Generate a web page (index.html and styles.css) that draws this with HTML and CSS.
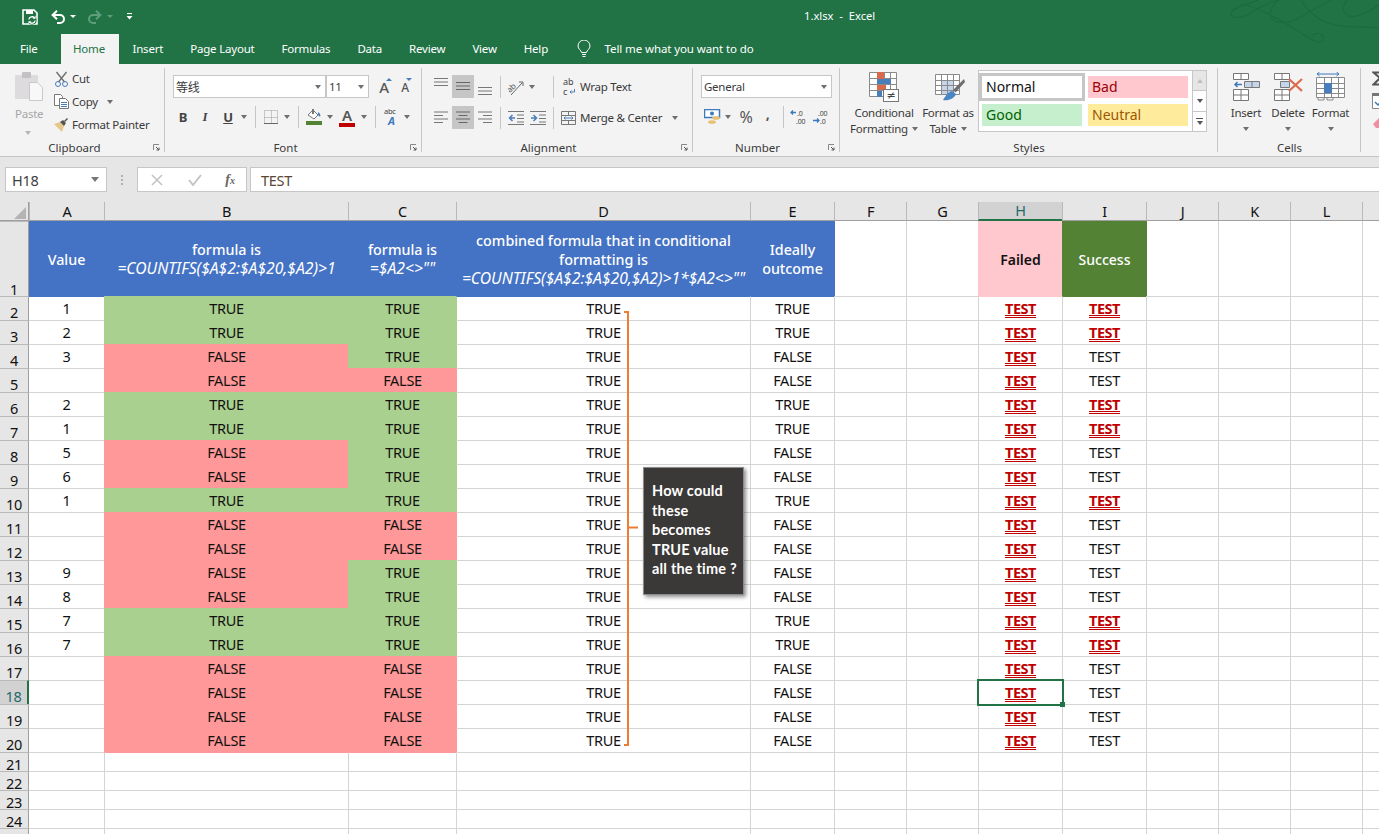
FILE: index.html
```html
<!DOCTYPE html>
<html lang="en">
<head>
<meta charset="utf-8">
<title>1.xlsx - Excel</title>
<link rel="stylesheet" href="styles.css">
</head>
<body>
<div class="app">
  <header class="title">
    <div class="qat">
      <svg class="q-save" width="16" height="16" viewBox="0 0 16 16"><path d="M1 1h11l3 3v11H1z" fill="none" stroke="#fff" stroke-width="1.6"/><path d="M4 1h7v4H4z" fill="#fff"/><circle cx="10" cy="11" r="4.6" fill="#217346"/><path d="M6.8 10.5a3.3 3.3 0 0 1 5.8-1.5M13.2 11.5a3.3 3.3 0 0 1-5.8 1.5" fill="none" stroke="#fff" stroke-width="1.3"/><path d="M13.6 6.8v3h-3zM6.4 15.2v-3h3z" fill="#fff"/></svg>
      <svg class="q-undo" width="15" height="14" viewBox="0 0 15 14"><path d="M2 5h7a4 4 0 0 1 0 8H6" fill="none" stroke="#fff" stroke-width="2"/><path d="M6 .8 1.6 5 6 9.2" fill="none" stroke="#fff" stroke-width="2"/></svg>
      <span class="caret white q-c1"></span>
      <svg class="q-redo" width="15" height="14" viewBox="0 0 15 14"><path d="M13 5H6a4 4 0 0 0 0 8h3" fill="none" stroke="#5d9d7c" stroke-width="2"/><path d="M9 .8 13.4 5 9 9.2" fill="none" stroke="#5d9d7c" stroke-width="2"/></svg>
      <span class="caret muted q-c2"></span>
      <svg class="q-more" width="7" height="7" viewBox="0 0 7 7"><path d="M1 .5h5" stroke="#fff" stroke-width="1.2"/><path d="M.5 3h6L3.5 6.5z" fill="#fff"/></svg>
    </div>
    <div class="doc">1.xlsx&nbsp; -&nbsp; Excel</div>
    <svg class="ornament" width="150" height="46" viewBox="0 0 150 46"><g fill="none" stroke="#1e6a40" stroke-width="1.2"><path d="M30 0C18 4 2 8 2 13c0 6 10 6 18 1S42 2 50 0"/><path d="M12 4c14 2 36 14 52 24 12 7 20 14 26 14 5 0 6-4 3-7s-8-2-11 2"/><path d="M50 0c-9 6-11 16-6 20s18 3 28-3 24-15 32-17"/><path d="M72 0c4 8 16 20 30 24s30 2 48 4"/><path d="M118 0c-5 6-5 14 2 16s22-4 30-12"/></g></svg>
  </header>

  <nav class="tabs">
    <span class="tab file">File</span>
    <span class="tab home">Home</span>
    <span class="tab">Insert</span>
    <span class="tab">Page Layout</span>
    <span class="tab">Formulas</span>
    <span class="tab">Data</span>
    <span class="tab">Review</span>
    <span class="tab">View</span>
    <span class="tab">Help</span>
    <svg class="bulb" width="14" height="18" viewBox="0 0 14 18"><path d="M4.5 12.5C4 10 1 9 1 6a6 6 0 0 1 12 0c0 3-3 4-3.500 6.500z" fill="none" stroke="#fff"/><path d="M5 14.500h4M5.500 16.500h3" stroke="#fff"/></svg>
    <span class="tell">Tell me what you want to do</span>
  </nav>

  <section class="ribbon">
    <div class="grp g-clip">
      <div class="body clip-body">
        <div class="paste">
          <svg width="28" height="31" viewBox="0 0 28 31"><rect x="0" y="4" width="23" height="24" rx="1" fill="#dedbde"/><rect x="7" y="1" width="9" height="6" rx="1" fill="#c4c1c4"/><path d="M14.500 11.500h8l5 5v13h-13z" fill="#f8f8f8" stroke="#c9c9c9"/></svg>
          <span class="paste-label">Paste</span>
          <span class="caret pale"></span>
        </div>
        <div class="clip-col">
          <div class="clip-row"><svg width="14" height="16" viewBox="0 0 14 16"><path d="M2 1l8 10M12 1L4 11" stroke="#6b6b6b" stroke-width="1.300" fill="none"/><circle cx="3.500" cy="13" r="2.500" fill="none" stroke="#4a7ebb"/><circle cx="10.500" cy="13" r="2.500" fill="none" stroke="#4a7ebb"/></svg><span>Cut</span></div>
          <div class="clip-row"><svg width="15" height="15" viewBox="0 0 15 15"><path d="M.5.500h6l2 2v9h-8z" fill="#fff" stroke="#777"/><path d="M5.500 4.500h6l3 3v7h-9z" fill="#fff" stroke="#777"/><path d="M7 8.500h6M7 10.500h6M7 12.500h6" stroke="#4a7ebb"/></svg><span>Copy</span><span class="caret copy-c"></span></div>
          <div class="clip-row"><svg width="15" height="15" viewBox="0 0 15 15"><path d="M0 7l6-2 4 4-2 6z" fill="#e8c88a"/><path d="M6 5l3-2 3 3-2 3z" fill="#555"/><path d="M10 4l3-3 1 1-3 3z" fill="#555"/></svg><span>Format Painter</span></div>
        </div>
      </div>
      <div class="foot">Clipboard<svg class="launch" width="7" height="7" viewBox="0 0 7 7"><path d="M.5 6V.5H6" fill="none" stroke="#888"/><path d="M3 3l3 3M6 3.500V6H3.500" fill="none" stroke="#555"/></svg></div>
    </div>

    <div class="grp g-font">
      <div class="body rows">
        <div class="row">
          <div class="sel font-name"><span class="cjk">等线</span><span class="caret"></span></div>
          <div class="sel font-size"><span>11</span><span class="caret"></span></div>
          <span class="ib w7"></span>
          <span class="ib w16 big-a">A<i class="tri up"></i></span>
          <span class="ib w6"></span>
          <span class="ib w14 small-a">A<i class="tri down"></i></span>
        </div>
        <div class="row row2">
          <b class="ib w20 glyph">B</b>
          <em class="ib w24 glyph">I</em>
          <span class="ib w22 glyph under">U</span>
          <span class="ib w10"><span class="caret"></span></span>
          <span class="ib w12"><i class="vsep"></i></span>
          <span class="ib w19"><svg width="14" height="14" viewBox="0 0 14 14"><path d="M.5.500h13v13H.5zM7.500 .5v13M.5 7.500h13" fill="none" stroke="#9a9a9a" stroke-dasharray="1 1"/><path d="M0 13.500h14" stroke="#666"/></svg></span>
          <span class="ib w14"><span class="caret"></span></span>
          <span class="ib w8"><i class="vsep"></i></span>
          <span class="ib w24"><svg width="16" height="17" viewBox="0 0 16 17"><path d="M2 7l5-5 5 5-4 4z" fill="#fff" stroke="#777"/><path d="M6 1h2v5H6z" fill="#777"/><path d="M12 4c2 1 3 3 2 5l-2-2z" fill="#4a7ebb"/><rect y="13" width="16" height="4" fill="#548235"/></svg></span>
          <span class="ib w8"><span class="caret"></span></span>
          <span class="ib w26 color-a">A</span>
          <span class="ib w8"><span class="caret"></span></span>
          <span class="ib w14"><i class="vsep"></i></span>
          <span class="ib w17"><svg class="over" width="14" height="17" viewBox="0 0 14 17"><text x="0" y="6" font-size="7.500" font-family="Noto Sans" fill="#444">abc</text><text x="4" y="17" font-size="11" font-weight="700" font-style="italic" font-family="Noto Sans" fill="#3d79bd">A</text></svg></span>
          <span class="ib w16"><span class="caret"></span></span>
        </div>
      </div>
      <div class="foot f-pad">Font<svg class="launch" width="7" height="7" viewBox="0 0 7 7"><path d="M.5 6V.5H6" fill="none" stroke="#888"/><path d="M3 3l3 3M6 3.500V6H3.500" fill="none" stroke="#555"/></svg></div>
    </div>

    <div class="grp g-align">
      <div class="body rows">
        <div class="row">
          <span class="ib w22"><svg width="14" height="23" viewBox="0 0 14 23"><path d="M0 3.500h14M0 7h14M0 10.500h14" stroke="#777"/></svg></span>
          <span class="ib w22 on"><svg width="14" height="23" viewBox="0 0 14 23"><path d="M0 7.500h14M0 11h14M0 14.500h14" stroke="#666"/></svg></span>
          <span class="ib w22"><svg width="14" height="23" viewBox="0 0 14 23"><path d="M0 12.500h14M0 16h14M0 19.500h14" stroke="#777"/></svg></span>
          <span class="ib w8"><i class="vsep"></i></span>
          <span class="ib w24"><svg class="over" width="18" height="18" viewBox="0 0 18 18"><text x="0" y="12" font-size="8" font-family="Noto Sans" fill="#555" transform="rotate(-45 5 10)">ab</text><path d="M4 17L15 5M12 4h4v4" stroke="#666" fill="none"/></svg></span>
          <span class="ib w8"><span class="caret"></span></span>
          <span class="ib w12"></span>
          <span class="ib w10"><i class="vsep"></i></span>
          <span class="ib w22"><svg class="over" width="13" height="18" viewBox="0 0 13 18"><text x="0" y="7" font-size="9" letter-spacing="0" font-family="Noto Sans" fill="#444">ab</text><text x="0" y="17" font-size="9" font-family="Noto Sans" fill="#444">c</text><path d="M11.500 11v3H7M8.500 12.500 7 14l1.500 1.500" fill="none" stroke="#4a7ebb"/></svg></span>
          <span class="lbl">Wrap Text</span>
        </div>
        <div class="row row2b">
          <span class="ib w22"><svg width="14" height="23" viewBox="0 0 14 23"><path d="M0 6h14M0 9.500h9M0 13h14M0 16.500h9" stroke="#777"/></svg></span>
          <span class="ib w22 on"><svg width="14" height="23" viewBox="0 0 14 23"><path d="M0 6h14M2.500 9.500h9M0 13h14M2.500 16.500h9" stroke="#666"/></svg></span>
          <span class="ib w22"><svg width="14" height="23" viewBox="0 0 14 23"><path d="M0 6h14M5 9.500h9M0 13h14M5 16.500h9" stroke="#777"/></svg></span>
          <span class="ib w8"><i class="vsep"></i></span>
          <span class="ib w23"><svg width="16" height="14" viewBox="0 0 16 14"><path d="M0 .5h16M9 4h7M9 7.500h7M9 11h7M0 13.500h16" stroke="#777"/><path d="M7 7H2M4.500 4 1.500 7l3 3" fill="none" stroke="#4a7ebb" stroke-width="1.500"/></svg></span>
          <span class="ib w22"><svg width="16" height="14" viewBox="0 0 16 14"><path d="M0 .5h16M9 4h7M9 7.500h7M9 11h7M0 13.500h16" stroke="#777"/><path d="M1 7h5M3.500 4l3 3-3 3" fill="none" stroke="#4a7ebb" stroke-width="1.500"/></svg></span>
          <span class="ib w8"><i class="vsep"></i></span>
          <span class="ib w22"><svg width="15" height="14" viewBox="0 0 15 14"><path d="M.5.500h14v13H.5zM.5 4.500h14M.5 9.500h14M7.500.5v4M7.500 9.500v4" fill="none" stroke="#777"/><path d="M3 7h9M4.500 5.500 3 7l1.500 1.500M10.500 5.500 12 7l-1.500 1.500" fill="none" stroke="#4a7ebb"/></svg></span>
          <span class="lbl merge">Merge &amp; Center</span>
          <span class="caret merge-c"></span>
        </div>
      </div>
      <div class="foot f-pad2">Alignment<svg class="launch" width="7" height="7" viewBox="0 0 7 7"><path d="M.5 6V.5H6" fill="none" stroke="#888"/><path d="M3 3l3 3M6 3.500V6H3.500" fill="none" stroke="#555"/></svg></div>
    </div>

    <div class="grp g-num">
      <div class="body rows">
        <div class="row">
          <div class="sel num-fmt"><span>General</span><span class="caret"></span></div>
        </div>
        <div class="row row2">
          <span class="ib w22"><svg width="17" height="16" viewBox="0 0 17 16"><rect x=".5" y=".5" width="15" height="8" fill="#fff" stroke="#3d79bd" stroke-width="1.500"/><circle cx="8" cy="4.500" r="2" fill="#3d79bd"/><ellipse cx="12" cy="9" rx="4" ry="1.800" fill="#e8c070"/><ellipse cx="8" cy="13" rx="4" ry="1.800" fill="#e8c070"/></svg></span>
          <span class="ib w10"><span class="caret"></span></span>
          <span class="ib w26 pct">%</span>
          <span class="ib w17 comma">,</span>
          <span class="ib w14"><i class="vsep"></i></span>
          <span class="ib w16"><svg class="over" width="16" height="15" viewBox="0 0 16 15"><text x="7" y="6.500" font-size="7" font-family="Noto Sans" fill="#444">.0</text><text x="6" y="14.500" font-size="7" font-family="Noto Sans" fill="#444">.00</text><path d="M6 3.500H1M3 1.500l-2 2 2 2" fill="none" stroke="#3d79bd" stroke-width="1.300"/></svg></span>
          <span class="ib w28"><svg class="over" width="16" height="15" viewBox="0 0 16 15"><text x="6" y="6.500" font-size="7" font-family="Noto Sans" fill="#444">.00</text><text x="8" y="14.500" font-size="7" font-family="Noto Sans" fill="#444">.0</text><path d="M1 11.500h6M5 9.500l2 2-2 2" fill="none" stroke="#3d79bd" stroke-width="1.300"/></svg></span>
        </div>
      </div>
      <div class="foot f-pad2">Number<svg class="launch" width="7" height="7" viewBox="0 0 7 7"><path d="M.5 6V.5H6" fill="none" stroke="#888"/><path d="M3 3l3 3M6 3.500V6H3.500" fill="none" stroke="#555"/></svg></div>
    </div>

    <div class="grp g-styles">
      <div class="body styles-body">
        <div class="bigbtn cf">
          <svg width="30" height="30" viewBox="0 0 30 30"><path d="M.5.500h27v24H.5zM.5 6.500h27M.5 12.500h27M.5 18.500h27M8.500.5v24M15.500.5v24M21.500.5v24" fill="#fff" stroke="#8a8a8a"/><rect x="8" y="0" width="7" height="7" fill="#d9694a"/><rect x="8" y="7" width="14" height="5" fill="#4a7ebb"/><rect x="8" y="13" width="9" height="5" fill="#d9694a"/><rect x="8" y="19" width="5" height="6" fill="#4a7ebb"/><rect x="14.500" y="17.500" width="15" height="12" fill="#fff" stroke="#777"/><text x="22" y="27" text-anchor="middle" font-size="11" font-family="DejaVu Sans" fill="#444">≠</text></svg>
          <span>Conditional</span>
          <span>Formatting<i class="caret inl"></i></span>
        </div>
        <div class="bigbtn ft">
          <svg width="30" height="30" viewBox="0 0 30 30"><rect x=".5" y="2.500" width="24" height="20" fill="#fff"/><rect x="6" y="8" width="13" height="14" fill="#c5d5ea"/><path d="M.5 2.500h24v20H.5zM.5 8.500h24M.5 13.500h24M.5 18.500h24M6.500 2.500v20M12.500 2.500v20M18.500 2.500v20" fill="none" stroke="#8a8a8a"/><path d="M29 7 18 18l2.500 2.500L30 10z" fill="#6e6e6e"/><path d="M17 19c-4 1-6 4-9 9 5 1 11-1 13-6z" fill="#4a85c5"/></svg>
          <span>Format as</span>
          <span>Table<i class="caret inl"></i></span>
        </div>
        <div class="gallery">
          <div class="gal-grid">
            <span class="st normal">Normal</span>
            <span class="st bad">Bad</span>
            <span class="st good">Good</span>
            <span class="st neutral">Neutral</span>
          </div>
          <div class="gal-scroll">
            <span class="gs gs-up"><i class="tri-up"></i></span>
            <span class="gs"><span class="caret dark"></span></span>
            <span class="gs gs-more"><i class="more-bar"></i><span class="caret dark"></span></span>
          </div>
        </div>
      </div>
      <div class="foot">Styles</div>
    </div>

    <div class="grp g-cells">
      <div class="body cells-body">
        <div class="bigbtn cell-btn">
          <svg width="28" height="30" viewBox="0 0 28 30"><path d="M1.500 1.500h15v6h-15zM9 1.500v6M1.500 17.500h15v11h-15zM1.500 23h15M9 17.500v11" fill="#fff" stroke="#777"/><path d="M12.500 9.500h15v6h-15zM20 9.500v6" fill="#c5d5ea" stroke="#777"/><path d="M10 12.500H3M5.500 10 3 12.500 5.500 15" fill="none" stroke="#3d79bd" stroke-width="1.500"/></svg>
          <span>Insert</span><span class="caret"></span>
        </div>
        <div class="bigbtn cell-btn">
          <svg width="31" height="30" viewBox="0 0 31 30"><path d="M1.500 1.500h15v6h-15zM9 1.500v6M1.500 17.500h15v11h-15zM1.500 23h15M9 17.500v11" fill="#fff" stroke="#777"/><path d="M7.500 9.500h9v6h-9z" fill="#c5d5ea" stroke="#777"/><path d="M16 7l13 12M29 7 16 19" stroke="#dd6b4a" stroke-width="2.200"/></svg>
          <span>Delete</span><span class="caret"></span>
        </div>
        <div class="bigbtn cell-btn wider">
          <svg width="29" height="30" viewBox="0 0 29 30"><path d="M1 2h22M3.500 0 1 2l2.500 2M20.500 0 23 2l-2.500 2" fill="none" stroke="#3d79bd"/><path d="M.5 5.500h28v20H.5zM.5 11.500h28M.5 16.500h28M.5 21.500h28M8.500 5.500v20M15.500 5.500v20M22.500 5.500v20" fill="#fff" stroke="#8a8a8a"/><rect x="8" y="11" width="8" height="10" fill="#4a7ebb"/><path d="M2 26v2h6v-2M11 26v2h6v-2" fill="none" stroke="#8a8a8a"/></svg>
          <span>Format</span><span class="caret"></span>
        </div>
      </div>
      <div class="foot">Cells</div>
    </div>

    <div class="g-edit">
      <svg width="16" height="16" viewBox="0 0 16 16"><path d="M14 2.500H1.500L8 8l-6.500 6.500H14" fill="none" stroke="#555" stroke-width="2"/></svg>
      <svg width="16" height="16" viewBox="0 0 16 16"><path d="M.5 .5h15v15H.5z" fill="#fff" stroke="#888"/><path d="M0 0h16v3H0z" fill="#777"/><path d="M3 9l3 3 5-6" fill="none" stroke="#3d79bd" stroke-width="1.500"/></svg>
      <svg width="16" height="12" viewBox="0 0 16 12"><path d="M1 8l7-7 6 4-7 7H4z" fill="#ef8f9f"/></svg>
    </div>
  </section>

  <div class="fbar">
    <div class="namebox"><span>H18</span><span class="caret wide"></span></div>
    <div class="dots"><i></i><i></i><i></i></div>
    <div class="fx-btns">
      <svg width="14" height="14" viewBox="0 0 14 14"><path d="M2 2l10 10M12 2 2 12" stroke="#c4c4c4" stroke-width="1.600"/></svg>
      <svg width="14" height="14" viewBox="0 0 14 14"><path d="M1 7l4 5 8-10" fill="none" stroke="#c4c4c4" stroke-width="2"/></svg>
      <span class="fx">f<small>x</small></span>
    </div>
    <div class="finput">TEST</div>
  </div>

  <div class="sheet">
    <table class="grid">
      <colgroup><col class="c0"><col class="ca"><col class="cb"><col class="cc"><col class="cd"><col class="ce"><col class="cn"><col class="cn"><col class="ct"><col class="ct"><col class="cn"><col class="cn"><col class="cn"><col class="cn"></colgroup>
      <tr class="heads"><th class="corner"><i></i></th><th>A</th><th>B</th><th>C</th><th>D</th><th>E</th><th>F</th><th>G</th><th class="cur">H</th><th>I</th><th>J</th><th>K</th><th>L</th><th></th></tr>
      <tr class="r1">
        <th>1</th>
        <td class="h">Value</td>
        <td class="h">formula is<br><em>=COUNTIFS($A$2:$A$20,$A2)&gt;1</em></td>
        <td class="h">formula is<br><em>=$A2&lt;&gt;""</em></td>
        <td class="h">combined formula that in conditional<br>formatting is<br><em>=COUNTIFS($A$2:$A$20,$A2)&gt;1*$A2&lt;&gt;""</em></td>
        <td class="h">Ideally<br>outcome</td>
        <td></td><td></td>
        <td class="pk">Failed</td>
        <td class="gn">Success</td>
        <td></td><td></td><td></td><td></td>
      </tr>
      <tr class="d"><th>2</th><td class="tb">1</td><td class="g">TRUE</td><td class="g">TRUE</td><td class="tb">TRUE</td><td class="tb">TRUE</td><td></td><td></td><td class="t tp"><u>TEST</u></td><td class="t tn"><u>TEST</u></td><td></td><td></td><td></td><td></td></tr>
      <tr class="d"><th>3</th><td>2</td><td class="g">TRUE</td><td class="g">TRUE</td><td>TRUE</td><td>TRUE</td><td></td><td></td><td class="t"><u>TEST</u></td><td class="t"><u>TEST</u></td><td></td><td></td><td></td><td></td></tr>
      <tr class="d"><th>4</th><td>3</td><td class="r">FALSE</td><td class="g">TRUE</td><td>TRUE</td><td>FALSE</td><td></td><td></td><td class="t"><u>TEST</u></td><td>TEST</td><td></td><td></td><td></td><td></td></tr>
      <tr class="d"><th>5</th><td></td><td class="r">FALSE</td><td class="r">FALSE</td><td>TRUE</td><td>FALSE</td><td></td><td></td><td class="t"><u>TEST</u></td><td>TEST</td><td></td><td></td><td></td><td></td></tr>
      <tr class="d"><th>6</th><td>2</td><td class="g">TRUE</td><td class="g">TRUE</td><td>TRUE</td><td>TRUE</td><td></td><td></td><td class="t"><u>TEST</u></td><td class="t"><u>TEST</u></td><td></td><td></td><td></td><td></td></tr>
      <tr class="d"><th>7</th><td>1</td><td class="g">TRUE</td><td class="g">TRUE</td><td>TRUE</td><td>TRUE</td><td></td><td></td><td class="t"><u>TEST</u></td><td class="t"><u>TEST</u></td><td></td><td></td><td></td><td></td></tr>
      <tr class="d"><th>8</th><td>5</td><td class="r">FALSE</td><td class="g">TRUE</td><td>TRUE</td><td>FALSE</td><td></td><td></td><td class="t"><u>TEST</u></td><td>TEST</td><td></td><td></td><td></td><td></td></tr>
      <tr class="d"><th>9</th><td>6</td><td class="r">FALSE</td><td class="g">TRUE</td><td>TRUE</td><td>FALSE</td><td></td><td></td><td class="t"><u>TEST</u></td><td>TEST</td><td></td><td></td><td></td><td></td></tr>
      <tr class="d"><th>10</th><td>1</td><td class="g">TRUE</td><td class="g">TRUE</td><td>TRUE</td><td>TRUE</td><td></td><td></td><td class="t"><u>TEST</u></td><td class="t"><u>TEST</u></td><td></td><td></td><td></td><td></td></tr>
      <tr class="d"><th>11</th><td></td><td class="r">FALSE</td><td class="r">FALSE</td><td>TRUE</td><td>FALSE</td><td></td><td></td><td class="t"><u>TEST</u></td><td>TEST</td><td></td><td></td><td></td><td></td></tr>
      <tr class="d"><th>12</th><td></td><td class="r">FALSE</td><td class="r">FALSE</td><td>TRUE</td><td>FALSE</td><td></td><td></td><td class="t"><u>TEST</u></td><td>TEST</td><td></td><td></td><td></td><td></td></tr>
      <tr class="d"><th>13</th><td>9</td><td class="r">FALSE</td><td class="g">TRUE</td><td>TRUE</td><td>FALSE</td><td></td><td></td><td class="t"><u>TEST</u></td><td>TEST</td><td></td><td></td><td></td><td></td></tr>
      <tr class="d"><th>14</th><td>8</td><td class="r">FALSE</td><td class="g">TRUE</td><td>TRUE</td><td>FALSE</td><td></td><td></td><td class="t"><u>TEST</u></td><td>TEST</td><td></td><td></td><td></td><td></td></tr>
      <tr class="d"><th>15</th><td>7</td><td class="g">TRUE</td><td class="g">TRUE</td><td>TRUE</td><td>TRUE</td><td></td><td></td><td class="t"><u>TEST</u></td><td class="t"><u>TEST</u></td><td></td><td></td><td></td><td></td></tr>
      <tr class="d"><th>16</th><td>7</td><td class="g">TRUE</td><td class="g">TRUE</td><td>TRUE</td><td>TRUE</td><td></td><td></td><td class="t"><u>TEST</u></td><td class="t"><u>TEST</u></td><td></td><td></td><td></td><td></td></tr>
      <tr class="d"><th>17</th><td></td><td class="r">FALSE</td><td class="r">FALSE</td><td>TRUE</td><td>FALSE</td><td></td><td></td><td class="t"><u>TEST</u></td><td>TEST</td><td></td><td></td><td></td><td></td></tr>
      <tr class="d"><th class="cur">18</th><td></td><td class="r">FALSE</td><td class="r">FALSE</td><td>TRUE</td><td>FALSE</td><td></td><td></td><td class="t"><u>TEST</u></td><td>TEST</td><td></td><td></td><td></td><td></td></tr>
      <tr class="d"><th>19</th><td></td><td class="r">FALSE</td><td class="r">FALSE</td><td>TRUE</td><td>FALSE</td><td></td><td></td><td class="t"><u>TEST</u></td><td>TEST</td><td></td><td></td><td></td><td></td></tr>
      <tr class="d"><th>20</th><td></td><td class="r">FALSE</td><td class="r">FALSE</td><td>TRUE</td><td>FALSE</td><td></td><td></td><td class="t"><u>TEST</u></td><td>TEST</td><td></td><td></td><td></td><td></td></tr>
      <tr class="e"><th>21</th><td></td><td class="tr"></td><td class="tr"></td><td></td><td></td><td></td><td></td><td></td><td></td><td></td><td></td><td></td><td></td></tr>
      <tr class="e"><th>22</th><td></td><td></td><td></td><td></td><td></td><td></td><td></td><td></td><td></td><td></td><td></td><td></td><td></td></tr>
      <tr class="e"><th>23</th><td></td><td></td><td></td><td></td><td></td><td></td><td></td><td></td><td></td><td></td><td></td><td></td><td></td></tr>
      <tr class="e"><th>24</th><td></td><td></td><td></td><td></td><td></td><td></td><td></td><td></td><td></td><td></td><td></td><td></td><td></td></tr>
      <tr class="e"><th></th><td></td><td></td><td></td><td></td><td></td><td></td><td></td><td></td><td></td><td></td><td></td><td></td><td></td></tr>
    </table>
    <svg class="bracket" width="20" height="440" viewBox="0 0 20 440"><path d="M4 2h4v433H4M8 217.500h10" fill="none" stroke="#ed7d31" stroke-width="2"/></svg>
    <div class="note">How could<br>these<br>becomes<br>TRUE value<br>all the time ?</div>
    <div class="cursor"><i></i></div>
  </div>
</div>
</body>
</html>
```

FILE: styles.css
```css
* { box-sizing: border-box; }
html, body { margin: 0; padding: 0; }
body { width: 1379px; height: 834px; overflow: hidden; background: #fff; font-family: "Noto Sans", sans-serif; font-size: 12px; color: #333; }
.app { display: flex; flex-direction: column; height: 834px; overflow: hidden; }
i { font-style: normal; }

/* title */
.title { position: relative; height: 34px; background: #217346; display: grid; grid-template-columns: 804px 1fr; color: #fff; }
.qat { display: flex; align-items: center; padding: 0 0 1px 22px; }
.q-undo { margin-left: 13px; }
.q-c1 { margin-left: 4px; }
.q-redo { margin-left: 11px; }
.q-c2 { margin-left: 5px; }
.q-more { margin-left: 13px; }
.doc { font-size: 11.200px; line-height: 32px; white-space: nowrap; }
.ornament { position: absolute; right: 0; top: 0; }

.caret { display: inline-block; width: 0; height: 0; border-left: 3.500px solid transparent; border-right: 3.500px solid transparent; border-top: 4px solid #6f6f6f; flex: none; }
.caret.white { border-top-color: #fff; border-left-width: 3px; border-right-width: 3px; border-top-width: 3px; }
.caret.muted { border-top-color: #5d9d7c; border-left-width: 3px; border-right-width: 3px; border-top-width: 3px; }
.caret.pale { border-top-color: #b5b5b5; }
.caret.dark { border-top-color: #555; }
.caret.inl { margin-left: 4px; vertical-align: 2px; }
.caret.wide { border-left-width: 4.500px; border-right-width: 4.500px; border-top-width: 5px; border-top-color: #777; }

/* tabs */
.tabs { height: 30px; background: #217346; display: flex; align-items: stretch; color: #fff; padding-left: 7px; font-size: 11.500px; letter-spacing: -0.2px; }
.tab { padding: 0 13.500px; line-height: 29px; white-space: nowrap; }
.tab.file { padding: 0 0 0 13px; width: 54px; }
.tab.home { background: #f3f3f3; color: #217346; padding: 0 12px; width: 58px; }
.bulb { margin: 6px 0 0 15px; }
.tell { margin-left: 14px; line-height: 29px; white-space: nowrap; letter-spacing: -0.1px; }

/* ribbon */
.ribbon { height: 93px; background: #f3f3f3; border-bottom: 1px solid #c6c6c6; display: flex; color: #3a3a3a; font-size: 11.500px; letter-spacing: -0.25px; }
.grp { position: relative; display: flex; flex-direction: column; height: 92px; flex: none; }
.grp::after { content: ""; position: absolute; right: 0; top: 4px; bottom: 4px; width: 1px; background: #c6c6c6; }
.g-clip { width: 165px; }
.g-font { width: 257px; }
.g-align { width: 271px; }
.g-num { width: 147px; }
.g-styles { width: 378px; }
.g-cells { width: 143px; }
.body { height: 75px; }
.foot { position: relative; height: 17px; text-align: center; line-height: 17px; color: #3a3a3a; letter-spacing: 0; }
.g-clip .foot, .f-pad { padding-right: 16px; }
.f-pad2 { padding-right: 18px; }
.launch { position: absolute; right: 5px; top: 5px; }
.over { overflow: visible; }

/* clipboard */
.clip-body { display: flex; padding-left: 15px; }
.paste { width: 30px; display: flex; flex-direction: column; align-items: flex-start; padding-top: 7px; color: #a6a6a6; }
.paste-label { line-height: 16px; margin-top: 4px; }
.paste .caret { margin: 9px 0 0 10px; }
.clip-col { margin-left: 9px; padding-top: 3px; }
.clip-row { display: flex; align-items: center; height: 23px; white-space: nowrap; }
.clip-row svg { width: 15px; }
.clip-row span:first-of-type { margin-left: 3px; }
.clip-row .copy-c { margin-left: 9px; }

/* rows */
.rows { padding: 11px 0 0 8px; }
.row { display: flex; align-items: center; height: 23px; }
.row2 { margin-top: 7px; }
.row2b { margin-top: 8px; }
.ib { display: inline-flex; align-items: center; justify-content: center; height: 23px; flex: none; }
.w4 { width: 4px; } .w6 { width: 6px; } .w7 { width: 7px; } .w8 { width: 8px; } .w10 { width: 10px; } .w12 { width: 12px; }
.w14 { width: 14px; } .w16 { width: 16px; } .w17 { width: 17px; } .w19 { width: 19px; } .w20 { width: 20px; }
.w22 { width: 22px; } .w23 { width: 23px; } .w24 { width: 24px; } .w26 { width: 26px; } .w28 { width: 28px; }
.vsep { display: block; width: 1px; height: 22px; background: #c6c6c6; }
.on { background: #c6c6c6; }
.sel { display: flex; align-items: center; justify-content: space-between; height: 23px; background: #fff; border: 1px solid #c6c6c6; padding: 0 4px 0 2px; flex: none; }
.font-name { width: 153px; }
.cjk { font-family: "Noto Sans CJK SC", sans-serif; font-size: 12px; }
.font-size { width: 43px; margin-left: 0; }
.num-fmt { width: 131px; }
.glyph { font-size: 13px; color: #444; font-family: "Liberation Serif", serif; font-weight: 700; }
b.glyph { font-family: "Noto Sans", sans-serif; }
.under { text-decoration: underline; font-family: "Noto Sans", sans-serif; }
.big-a, .small-a { position: relative; color: #555; font-weight: 500; }
.big-a { font-size: 15px; }
.small-a { font-size: 12px; padding-top: 2px; }
.tri { position: absolute; right: 0; top: 3px; width: 0; height: 0; border-left: 3px solid transparent; border-right: 3px solid transparent; }
.tri.up { border-bottom: 3px solid #4a7ebb; }
.tri.down { border-top: 3px solid #4a7ebb; }
.color-a { font-size: 15px; font-weight: 600; color: #555; position: relative; padding-bottom: 4px; }
.color-a::after { content: ""; position: absolute; left: 5px; right: 5px; bottom: 1px; height: 4px; background: #c00000; }
.lbl { white-space: nowrap; }
.merge { margin-left: 1px; }
.merge-c { margin-left: 10px; }
.pct { font-size: 16px; color: #555; }
.comma { font-size: 14px; font-weight: 700; color: #555; padding-bottom: 6px; }

/* styles */
.styles-body { display: flex; align-items: flex-start; padding-left: 4px; }
.bigbtn { display: flex; flex-direction: column; align-items: center; padding-top: 8px; white-space: nowrap; line-height: 16px; }
.bigbtn svg { margin-bottom: 3px; }
.cf { width: 80px; }
.ft { width: 48px; }
.ft svg { margin-left: 4px; }
.gallery { display: flex; width: 229px; height: 62px; margin: 6px 0 0 6px; background: #fff; border: 1px solid #c6c6c6; letter-spacing: 0; }
.gal-grid { display: grid; grid-template-columns: 100px 100px; grid-auto-rows: 22px; gap: 6px; padding: 5px 4px 0 3px; width: 213px; }
.st { font-size: 14px; line-height: 21px; padding-left: 4px; }
.normal { color: #111; outline: 3px solid #c6c6c6; }
.bad { background: #ffc7ce; color: #9c0006; }
.good { background: #c6efce; color: #006100; }
.neutral { background: #ffeb9c; color: #9c5700; }
.gal-scroll { flex: 1; display: flex; flex-direction: column; border-left: 1px solid #c6c6c6; }
.gs { flex: 1; display: flex; flex-direction: column; gap: 2px; align-items: center; justify-content: center; border-top: 1px solid #c6c6c6; }
.gs-up { background: #e6e6e6; border-top: 0; }
.tri-up { width: 0; height: 0; border-left: 3.500px solid transparent; border-right: 3.500px solid transparent; border-bottom: 4px solid #c0c0c0; }
.more-bar { display: block; width: 7px; height: 1px; background: #555; }

/* cells */
.cells-body { display: flex; padding-left: 7px; }
.cell-btn { width: 42px; }
.cell-btn.wider { width: 43px; }
.cell-btn .caret { margin-top: 6px; }
.g-edit { display: flex; flex-direction: column; gap: 7px; padding: 6px 0 0 11px; }

/* formula bar */
.fbar { height: 45px; background: #e6e6e6; display: flex; align-items: flex-start; padding: 10px 0 0 5px; }
.namebox { display: flex; align-items: center; justify-content: space-between; width: 102px; height: 25px; background: #fff; border: 1px solid #c6c6c6; padding: 0 7px 0 6px; font-size: 14.500px; letter-spacing: -0.3px; color: #3f3f3f; flex: none; }
.dots { width: 30px; height: 25px; display: flex; flex-direction: column; align-items: center; justify-content: center; gap: 2px; flex: none; }
.dots i { display: block; width: 2px; height: 2px; background: #b0b0b0; }
.fx-btns { display: flex; align-items: center; justify-content: space-between; width: 110px; height: 25px; background: #fff; border: 1px solid #c6c6c6; padding: 0 11px 0 12px; flex: none; }
.fx { font-family: "Liberation Serif", serif; font-style: italic; font-weight: 700; font-size: 14px; color: #666; }
.fx small { font-size: 10px; }
.finput { flex: 1; height: 25px; margin-left: 3px; background: #fff; border: 1px solid #c6c6c6; border-right: 0; padding-left: 10px; font-size: 14.500px; letter-spacing: -0.3px; line-height: 24px; color: #5a4636; }

/* sheet */
.sheet { position: relative; flex: none; height: 632px; width: 1379px; overflow: hidden; background: #fff; }
.grid { table-layout: fixed; width: 1434px; border-collapse: separate; border-spacing: 0; font-size: 14.500px; letter-spacing: -0.3px; color: #111; }
.c0 { width: 29px; } .ca { width: 75px; } .cb { width: 244px; } .cc { width: 108px; } .cd { width: 294px; } .ce { width: 84px; } .cn { width: 72px; } .ct { width: 84px; }
.grid th, .grid td { padding: 0; font-weight: 400; text-align: center; white-space: nowrap; }
.grid td { border-left: 1px solid #d4d4d4; border-top: 1px solid #d4d4d4; line-height: 21px; }
.grid tr > td:nth-child(2) { border-left: 0; }
.grid tr > th { background: #e6e6e6; }
.grid tr:not(.heads) > th { border-right: 1px solid #9f9f9f; border-top: 1px solid #b9b9b9; vertical-align: bottom; }
.grid .d th { line-height: 16px; }
.grid .e th { line-height: 14px; }

.heads { height: 19px; }
.heads th { height: 19px; line-height: 18px; border-bottom: 1px solid #9f9f9f; border-left: 1px solid #b9b9b9; vertical-align: bottom; }
.heads th.corner { border-left: 0; border-right: 1px solid #9f9f9f; position: relative; }
.corner i { position: absolute; right: 2px; bottom: 1px; width: 0; height: 0; border-left: 12px solid transparent; border-bottom: 12px solid #b4b4b4; }
.grid .heads th.cur { background: #d2d2d2; border-bottom: 2px solid #217346; color: #1f6a6a; line-height: 17px; }

.r1 { height: 75px; }
.grid .r1 th { border-top: 0; line-height: 14px; }
.grid .r1 td { border-top: 0; padding: 1px 0 0; line-height: 19px; letter-spacing: 0; }
.grid .r1 td.h { background: #4472c4; color: #fff; font-weight: 500; border-left-color: transparent; font-size: 14.300px; }
.r1 em { font-size: 15.700px; font-weight: 400; }
.grid td.h + td { border-left-color: #4472c4; }
.grid .r1 td.pk { background: #ffc7ce; color: #111; font-weight: 600; border-left-color: transparent; font-size: 14px; }
.grid .r1 td.gn { background: #548235; color: #fff; font-weight: 500; border-left-color: transparent; font-size: 14px; }
.grid td.gn + td { border-left-color: #548235; }

.d { height: 24px; }
.e { height: 19px; }
.grid td.tb { border-top-color: #4472c4; }
.grid td.tp { border-top-color: #ffc7ce; }
.grid td.tn { border-top-color: #548235; }
.grid td.g { background: #a9d08e; border-color: #a9d08e; }
.grid td.r { background: #ff9999; border-color: #ff9999; }
.grid td.g + td { border-left-color: #a9d08e; }
.grid td.r + td { border-left-color: #ff9999; }
.grid td.g + td.r { border-left-color: #ff9999; }
.grid td.r + td.g { border-left-color: #a9d08e; }
.grid td.tr { border-top-color: #ff9999; }
.grid td.t { color: #c00000; font-weight: 700; letter-spacing: -0.5px; }
.t u { display: inline-block; text-decoration: none; line-height: 14px; border-bottom: 3px double #c00000; }
.grid .d th.cur { background: #d2d2d2; color: #1f6a6a; border-right: 2px solid #217346; }

/* overlays */
.bracket { position: absolute; left: 620px; top: 108px; }
.note { position: absolute; left: 643px; top: 265px; width: 101px; height: 128px; background: #3b3838; border: 1px solid #8c8c8c; box-shadow: 2px 2px 4px rgba(0,0,0,.45); color: #fff; font-family: Lato, sans-serif; font-weight: 700; font-size: 14.500px; letter-spacing: 0.2px; line-height: 19.500px; padding: 13px 0 0 8px; white-space: nowrap; }
.cursor { position: absolute; left: 977px; top: 477px; width: 87px; height: 27px; border: 2px solid #217346; }
.cursor i { position: absolute; right: -3px; bottom: -3px; width: 5px; height: 5px; background: #217346; box-sizing: content-box; }
```
